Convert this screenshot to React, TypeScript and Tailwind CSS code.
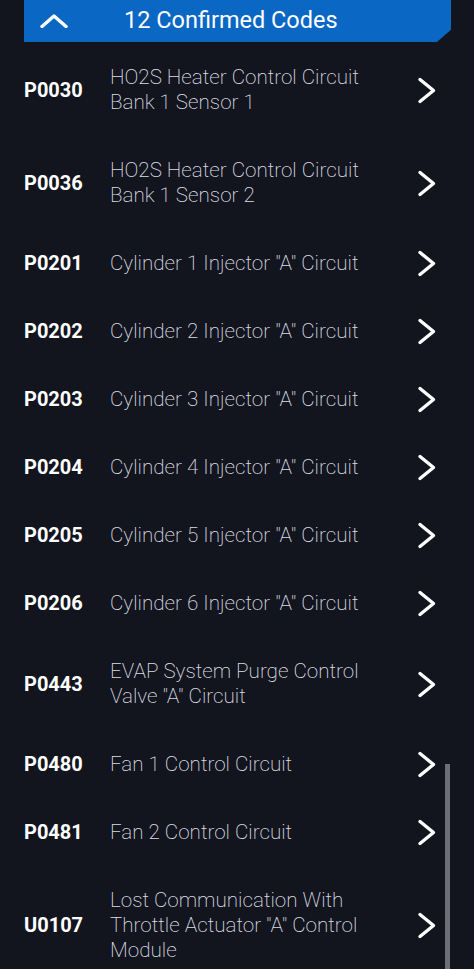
const codes = [
  { code: "P0030", desc: "HO2S Heater Control Circuit Bank 1 Sensor 1" },
  { code: "P0036", desc: "HO2S Heater Control Circuit Bank 1 Sensor 2" },
  { code: "P0201", desc: 'Cylinder 1 Injector "A" Circuit' },
  { code: "P0202", desc: 'Cylinder 2 Injector "A" Circuit' },
  { code: "P0203", desc: 'Cylinder 3 Injector "A" Circuit' },
  { code: "P0204", desc: 'Cylinder 4 Injector "A" Circuit' },
  { code: "P0205", desc: 'Cylinder 5 Injector "A" Circuit' },
  { code: "P0206", desc: 'Cylinder 6 Injector "A" Circuit' },
  { code: "P0443", desc: 'EVAP System Purge Control Valve "A" Circuit' },
  { code: "P0480", desc: "Fan 1 Control Circuit" },
  { code: "P0481", desc: "Fan 2 Control Circuit" },
  { code: "U0107", desc: 'Lost Communication With Throttle Actuator "A" Control Module' },
];

const ChevronUp = () => (
  <svg width="28" height="14" viewBox="0 0 28 14" fill="none">
    <path d="M2 12.5 L14 2 L26 12.5" stroke="white" strokeWidth="3.4" strokeLinecap="round" strokeLinejoin="round" />
  </svg>
);

const ChevronRight = () => (
  <svg width="20" height="27" viewBox="0 0 20 27" fill="none">
    <path d="M3 2.5 L16.5 13.5 L3 24.5" stroke="white" strokeWidth="3.4" strokeLinecap="round" strokeLinejoin="round" />
  </svg>
);

const CodeRow = ({ code, desc }: { code: string; desc: string }) => {
  return (
    <div className="flex items-center py-[21.5px] pl-6">
      <div className="w-[86px] shrink-0 text-[20px] font-bold leading-[25px] text-white">{code}</div>
      <div className="w-[280px] shrink-0 text-[20.6px] font-extralight leading-[25px] text-[#dcdde2]">{desc}</div>
      <div className="ml-[27px] flex h-[25px] items-center">
        <ChevronRight />
      </div>
    </div>
  );
};

export default function App() {
  return (
    <div className="relative min-h-[969px] w-full overflow-hidden bg-[#12141e] font-['Roboto','Liberation_Sans',sans-serif]">
      <div className="ml-6 flex h-[42px] w-[427px] items-center bg-[#0a67c3] pl-[16px] [clip-path:polygon(0_0,100%_0,100%_71%,96.7%_100%,0_100%)]">
        <ChevronUp />
        <span className="ml-[56px] text-[23.5px] font-[450] text-white">12 Confirmed Codes</span>
      </div>
      <div className="pt-[1.5px]">
        {codes.map((c) => (
          <CodeRow key={c.code} code={c.code} desc={c.desc} />
        ))}
      </div>
      <div className="absolute left-[445px] top-[764px] h-[205px] w-[5px] bg-[#6c6f7a]" />
    </div>
  );
}
